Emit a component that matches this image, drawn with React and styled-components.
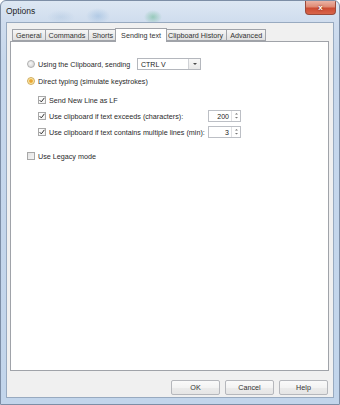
import React from 'react'
import styled, { createGlobalStyle } from 'styled-components'

const Global = createGlobalStyle`
  html, body { margin: 0; padding: 0; }
  body {
    width: 340px;
    height: 405px;
    overflow: hidden;
    background: #ffffff;
    font-family: 'Liberation Sans', Arial, sans-serif;
  }
`

const Window = styled.div`
  width: 340px;
  height: 405px;
  box-sizing: border-box;
  display: flex;
  flex-direction: column;
  border: 1px solid #7d8ea6;
  border-radius: 6px 6px 0 0;
  background:
    radial-gradient(ellipse 14px 7px at 60px 16px, rgba(120, 160, 200, 0.18), transparent),
    radial-gradient(ellipse 12px 8px at 97px 15px, rgba(80, 140, 200, 0.25), transparent),
    radial-gradient(ellipse 9px 7px at 152px 16px, rgba(40, 160, 90, 0.35), transparent),
    linear-gradient(180deg, #dde7f3 0px, #d0ddee 20px, #c6d7ec 60px, #c2d5eb 100%);
  overflow: hidden;
`

const TitleBar = styled.div`
  height: 21px;
  flex: 0 0 21px;
  display: flex;
  align-items: flex-start;
  justify-content: space-between;
`

const Title = styled.div`
  margin: 5px 0 0 5px;
  font-size: 8.5px;
  color: #1e1e1e;
`

const CloseButton = styled.div`
  width: 31px;
  height: 14px;
  margin-right: 3px;
  box-sizing: border-box;
  border: 1px solid #9a4a3a;
  border-top: none;
  border-radius: 0 0 4px 4px;
  background: linear-gradient(180deg, #ebb3a5 0%, #df8a74 45%, #cc4c33 55%, #d8654a 100%);
  color: #ffffff;
  font-size: 8px;
  font-weight: bold;
  display: flex;
  align-items: center;
  justify-content: center;
  text-shadow: 0 0 2px #6b1a0c;
`

const Client = styled.div`
  flex: 1;
  margin: 0 5px 6px 5px;
  border: 1px solid #98aac0;
  background: #f0f0f0;
  display: flex;
  flex-direction: column;
  padding: 5px 4px 0 3px;
`

const Tabs = styled.div`
  display: flex;
  align-items: flex-end;
  padding-left: 2px;
  position: relative;
  z-index: 1;
`

const Tab = styled.div`
  height: ${p => (p.$active ? 14 : 12)}px;
  box-sizing: border-box;
  padding: 0 ${p => (p.$active ? 5 : 3)}px;
  margin-right: ${p => (p.$active ? -2 : 0)}px;
  margin-bottom: ${p => (p.$active ? -1 : 0)}px;
  margin-left: ${p => (p.$first ? 0 : p.$active ? -2 : -1)}px;
  border: 1px solid #a0a3a9;
  border-bottom: ${p => (p.$active ? 'none' : '1px solid #a0a3a9')};
  background: ${p =>
    p.$active ? '#ffffff' : 'linear-gradient(180deg, #f6f6f6 0%, #ebebeb 50%, #e0e0e0 100%)'};
  font-size: 7.2px;
  color: #333;
  display: flex;
  align-items: center;
  white-space: nowrap;
  position: relative;
  z-index: ${p => (p.$active ? 2 : 1)};
`

const Panel = styled.div`
  height: 330px;
  box-sizing: border-box;
  background: #ffffff;
  border: 1px solid #a0a3a9;
  padding: 16px 0 0 16px;
  display: flex;
  flex-direction: column;
`

const Row = styled.div`
  display: flex;
  align-items: center;
  height: 12px;
  margin-top: ${p => p.$gap || 0}px;
  margin-left: ${p => p.$indent || 0}px;
  font-size: 7.2px;
  color: #2a2a2a;
  white-space: nowrap;
`

const Radio = styled.span`
  width: 8px;
  height: 8px;
  flex: 0 0 8px;
  box-sizing: border-box;
  border-radius: 50%;
  border: 1px solid ${p => (p.$on ? '#d0ab5c' : '#b0b0b0')};
  background: ${p =>
    p.$on
      ? 'radial-gradient(circle, #e39a2a 0, #efb040 1.5px, #fbe9a8 2.4px, #f7e7b8 100%)'
      : 'radial-gradient(circle at 40% 40%, #f7f7f7 0, #dedede 60%, #cccccc 100%)'};
  margin-right: 3px;
`

const Box = styled.span`
  width: 8px;
  height: 8px;
  flex: 0 0 8px;
  box-sizing: border-box;
  border: 1px solid #a8a8a8;
  background: ${p =>
    p.$on ? 'linear-gradient(135deg, #ffffff, #f2f2f2)' : 'linear-gradient(135deg, #e4e4e4, #f4f4f4)'};
  display: flex;
  align-items: center;
  justify-content: center;
  margin-right: 3px;
`

const LabelText = styled.span`
  width: ${p => (p.$width ? `${p.$width}px` : 'auto')};
  flex: 0 0 auto;
`

const Select = styled.div`
  width: 64px;
  height: 12px;
  box-sizing: border-box;
  border: 1px solid #b4b7bd;
  background: #ffffff;
  display: flex;
  align-items: stretch;
  font-size: 7px;
  color: #1a1a1a;
`

const SelectValue = styled.span`
  flex: 1;
  display: flex;
  align-items: center;
  padding-left: 3px;
`

const DropButton = styled.span`
  width: 11px;
  border-left: 1px solid #d0d2d6;
  background: linear-gradient(180deg, #f8f8f8, #e8e8e8);
  display: flex;
  align-items: center;
  justify-content: center;
`

const Spin = styled.div`
  width: 33px;
  height: 12px;
  box-sizing: border-box;
  border: 1px solid #bcbfc5;
  background: #ffffff;
  display: flex;
  align-items: stretch;
  font-size: 7px;
  color: #1a1a1a;
`

const SpinValue = styled.span`
  flex: 1;
  display: flex;
  align-items: center;
  justify-content: flex-end;
  padding-right: 2px;
`

const SpinArrows = styled.span`
  width: 8px;
  border-left: 1px solid #e0e1e4;
  display: flex;
  flex-direction: column;
  align-items: center;
  justify-content: space-evenly;
`

const Footer = styled.div`
  display: flex;
  justify-content: flex-end;
  gap: 5px;
  padding: 9px 1px 0 0;
`

const Button = styled.div`
  width: 49px;
  height: 15px;
  box-sizing: border-box;
  border: 1px solid #b5b7bc;
  border-radius: 2px;
  background: linear-gradient(180deg, #fafafa 0%, #f3f3f3 50%, #ebebeb 51%, #e5e5e5 100%);
  font-size: 7.2px;
  color: #333;
  display: flex;
  align-items: center;
  justify-content: center;
`

const Check = () => (
  <svg width="6" height="6" viewBox="0 0 6 6">
    <path d="M0.6 3.1 L2.3 4.9 L5.4 0.8" fill="none" stroke="#333" strokeWidth="1" />
  </svg>
)

const Tri = ({ up, w = 4, color = '#4a4a4a' }) => (
  <svg width={w} height={w / 2} viewBox="0 0 4 2">
    <path d={up ? 'M0 2 L4 2 L2 0 Z' : 'M0 0 L4 0 L2 2 Z'} fill={color} />
  </svg>
)

const tabs = ['General', 'Commands', 'Shorts', 'Sending text', 'Clipboard History', 'Advanced']

const SpinBox = ({ value }) => (
  <Spin>
    <SpinValue>{value}</SpinValue>
    <SpinArrows>
      <Tri up w={3} color="#777" />
      <Tri w={3} color="#777" />
    </SpinArrows>
  </Spin>
)

export default function App() {
  return (
    <>
      <Global />
      <Window>
        <TitleBar>
          <Title>Options</Title>
          <CloseButton>x</CloseButton>
        </TitleBar>
        <Client>
          <Tabs>
            {tabs.map((t, i) => (
              <Tab key={t} $first={i === 0} $active={t === 'Sending text'}>
                {t}
              </Tab>
            ))}
          </Tabs>
          <Panel>
            <Row>
              <Radio />
              <LabelText $width={99}>Using the Clipboard, sending</LabelText>
              <Select>
                <SelectValue>CTRL V</SelectValue>
                <DropButton>
                  <Tri />
                </DropButton>
              </Select>
            </Row>
            <Row $gap={5}>
              <Radio $on />
              <LabelText>Direct typing (simulate keystrokes)</LabelText>
            </Row>
            <Row $gap={7} $indent={11}>
              <Box $on>
                <Check />
              </Box>
              <LabelText>Send New Line as LF</LabelText>
            </Row>
            <Row $gap={4} $indent={11}>
              <Box $on>
                <Check />
              </Box>
              <LabelText $width={159}>Use clipboard if text exceeds (characters):</LabelText>
              <SpinBox value="200" />
            </Row>
            <Row $gap={4} $indent={11}>
              <Box $on>
                <Check />
              </Box>
              <LabelText $width={159}>Use clipboard if text contains multiple lines (min):</LabelText>
              <SpinBox value="3" />
            </Row>
            <Row $gap={12}>
              <Box />
              <LabelText>Use Legacy mode</LabelText>
            </Row>
          </Panel>
          <Footer>
            <Button>OK</Button>
            <Button>Cancel</Button>
            <Button>Help</Button>
          </Footer>
        </Client>
      </Window>
    </>
  )
}
